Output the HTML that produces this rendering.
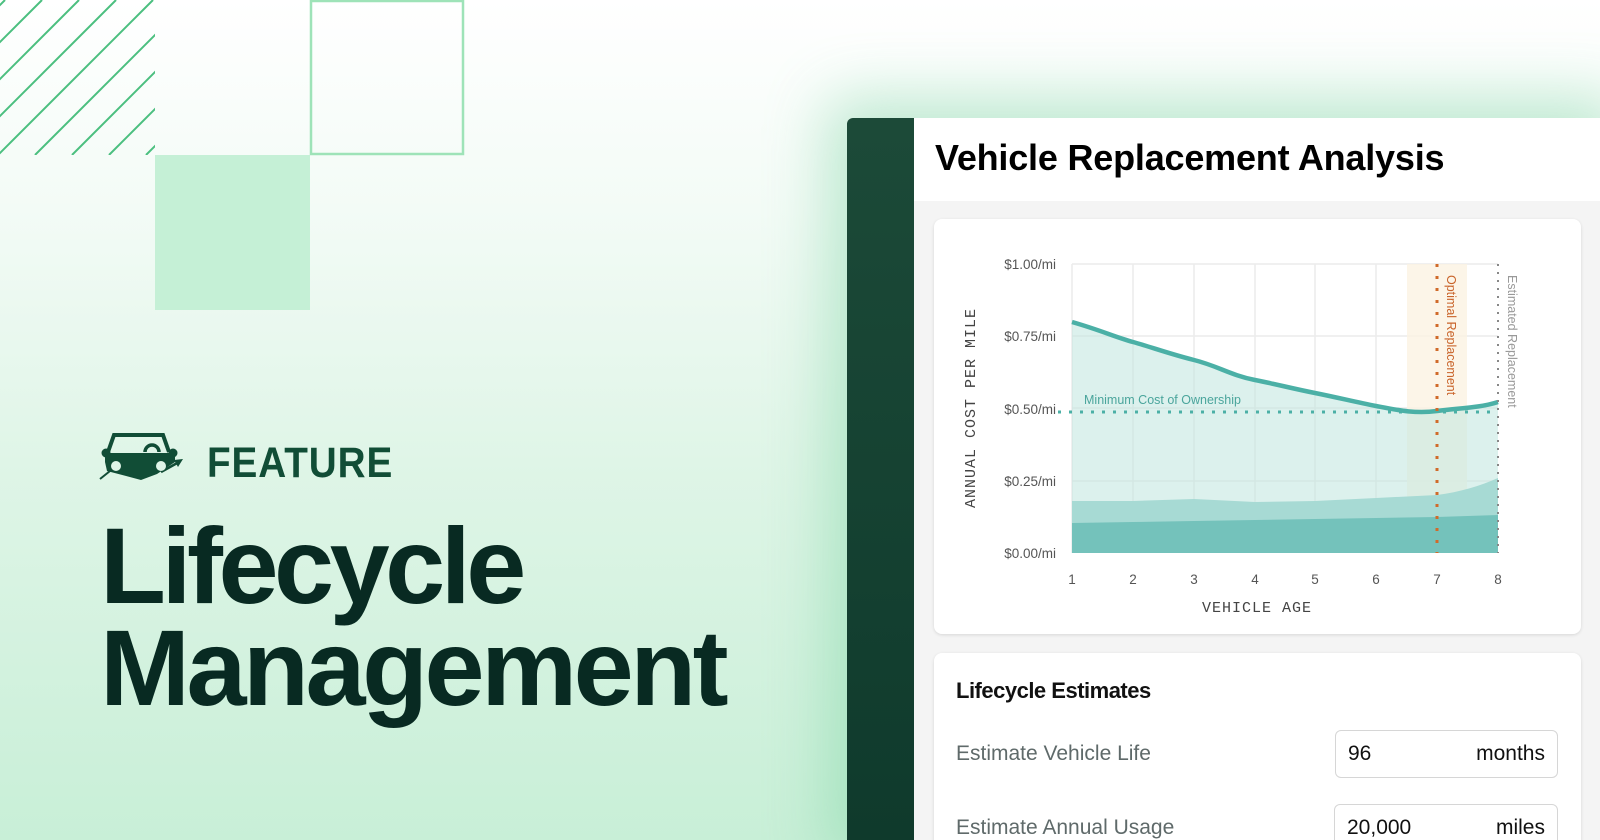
<!DOCTYPE html>
<html><head><meta charset="utf-8"><style>
*{margin:0;padding:0;box-sizing:border-box}
html,body{width:1600px;height:840px;overflow:hidden}
body{position:relative;font-family:"Liberation Sans",sans-serif;
background:linear-gradient(180deg,#ffffff 0%,#f3fbf6 25%,#dff5e7 55%,#c8efd7 100%);}
.abs{position:absolute}
.feature{left:207px;top:439px;font-size:43px;font-weight:bold;color:#114d36;letter-spacing:1px;transform:scaleX(0.9);transform-origin:left top;white-space:nowrap}
.h1{left:100px;font-size:108px;font-weight:bold;color:#082a22;letter-spacing:-4.5px;line-height:1;white-space:nowrap}
.panel{left:847px;top:118px;width:753px;height:722px;border-radius:6px 0 0 0;
box-shadow:0 0 60px 20px rgba(120,210,160,0.45);background:#f4f4f4;overflow:hidden}
.side{left:0;top:0;width:67px;height:722px;background:linear-gradient(180deg,#1c4a38,#0f3a2c)}
.head{left:67px;top:0;width:686px;height:83px;background:#fff}
.title{left:88px;top:19px;font-size:36px;font-weight:bold;color:#000;letter-spacing:-0.2px;white-space:nowrap}
.card{background:#fff;border-radius:8px;box-shadow:0 1px 3px rgba(0,0,0,0.12)}
.lbl{font-size:21px;color:#5f6a6a}
.inp{border:1.5px solid #d6d6d6;border-radius:6px;background:#fff;font-size:21px;color:#111;padding:0 12px;display:flex;justify-content:space-between;align-items:center}
</style></head><body>
<svg class="abs" style="left:0;top:0" width="480" height="320">
<defs><clipPath id="c"><rect x="0" y="0" width="155" height="155"/></clipPath></defs>
<g clip-path="url(#c)" stroke="#4bbf7f" stroke-width="2">
<line x1="-150" y1="155" x2="5" y2="0"/><line x1="-113" y1="155" x2="42" y2="0"/><line x1="-76" y1="155" x2="79" y2="0"/><line x1="-39" y1="155" x2="116" y2="0"/><line x1="-2" y1="155" x2="153" y2="0"/><line x1="35" y1="155" x2="190" y2="0"/><line x1="72" y1="155" x2="227" y2="0"/><line x1="109" y1="155" x2="264" y2="0"/><line x1="146" y1="155" x2="301" y2="0"/>
</g>
<rect x="311" y="1" width="152" height="153" fill="none" stroke="#9ee3b8" stroke-width="2.5"/>
<rect x="155" y="155" width="155" height="155" fill="#c5f0d6"/>
</svg>
<svg class="abs" style="left:95px;top:425px" width="95" height="65" viewBox="0 0 95 65">
<g fill="#114d36" stroke="#114d36">
<path d="M13,27 L19,10 L68,10 L74,27" fill="none" stroke-width="4"/>
<path d="M50,27 A7,7 0 0 1 64,27" fill="none" stroke-width="3.5"/>
<circle cx="11" cy="28" r="4"/><circle cx="78" cy="28" r="4"/>
<polygon points="10,28 80,28 80,37 62,49 46,55 12,46 10,37" stroke="none"/>
<line x1="15" y1="46" x2="5" y2="54" stroke-width="2"/>
<line x1="66" y1="47" x2="84" y2="37" stroke-width="2.5"/>
<polygon points="88,34 79,35 83,42" stroke="none"/>
</g>
<circle cx="21" cy="41" r="5" fill="#dff5e8"/><circle cx="66" cy="41" r="5" fill="#dff5e8"/>
</svg>
<div class="abs feature">FEATURE</div>
<div class="abs h1" style="top:512px">Lifecycle</div>
<div class="abs h1" style="top:614px;letter-spacing:-3.5px">Management</div>

<div class="abs panel">
<div class="abs side"></div>
<div class="abs head"></div>
<div class="abs title">Vehicle Replacement Analysis</div>
<div class="abs card" style="left:87px;top:101px;width:647px;height:415px"></div>
<div class="abs card" style="left:87px;top:535px;width:647px;height:200px"></div>
<div class="abs" style="left:109px;top:560px;font-size:22px;font-weight:bold;color:#111;letter-spacing:-0.5px">Lifecycle Estimates</div>
<div class="abs lbl" style="left:109px;top:624px">Estimate Vehicle Life</div>
<div class="abs inp" style="left:488px;top:612px;width:223px;height:48px"><span>96</span><span>months</span></div>
<div class="abs lbl" style="left:109px;top:698px">Estimate Annual Usage</div>
<div class="abs inp" style="left:487px;top:686px;width:224px;height:48px"><span>20,000</span><span>miles</span></div>
</div>

<svg class="abs" style="left:0;top:0" width="1600" height="840" font-family="Liberation Sans,sans-serif">
<g stroke="#ececec" stroke-width="1.5">
<line x1="1072" y1="264" x2="1498" y2="264"/><line x1="1072" y1="336" x2="1498" y2="336"/><line x1="1072" y1="408" x2="1498" y2="408"/><line x1="1072" y1="481" x2="1498" y2="481"/>
<line x1="1072" y1="264" x2="1072" y2="553"/><line x1="1133" y1="264" x2="1133" y2="553"/><line x1="1194" y1="264" x2="1194" y2="553"/><line x1="1255" y1="264" x2="1255" y2="553"/><line x1="1315" y1="264" x2="1315" y2="553"/><line x1="1376" y1="264" x2="1376" y2="553"/>
</g>
<rect x="1407" y="264" width="60" height="289" fill="#fbf3e2" opacity="0.8"/>
<path d="M1072,322 C1100,330 1115,337 1133,342 S1170,354 1194,360 S1230,375 1255,380 S1290,388 1315,393 S1355,402 1376,406 S1415,414 1437,411 S1480,408 1498,402 L1498,553 L1072,553Z" fill="#bfe5df" opacity="0.55"/>
<path d="M1072,501 L1133,501 L1194,499 L1255,502 L1315,501 L1376,498 L1437,495 C1460,492 1480,486 1498,478 L1498,553 L1072,553Z" fill="#a7dad4"/>
<path d="M1072,523 L1133,522 L1194,521 L1255,520 L1315,519 L1376,518 L1437,517 L1498,515 L1498,553 L1072,553Z" fill="#74c2bb"/>
<path d="M1072,322 C1100,330 1115,337 1133,342 S1170,354 1194,360 S1230,375 1255,380 S1290,388 1315,393 S1355,402 1376,406 S1415,414 1437,411 S1480,408 1498,402" fill="none" stroke="#4bb0a6" stroke-width="4.5"/>
<line x1="1058" y1="412" x2="1498" y2="412" stroke="#4bb0a6" stroke-width="3" stroke-dasharray="3 8"/>
<line x1="1437" y1="264" x2="1437" y2="553" stroke="#d06a2a" stroke-width="3" stroke-dasharray="3 9"/>
<line x1="1498" y1="264" x2="1498" y2="553" stroke="#888" stroke-width="2" stroke-dasharray="2 6"/>
<text x="1084" y="404" font-size="12.5" fill="#4aa59c">Minimum Cost of Ownership</text>
<text transform="translate(1447,275) rotate(90)" font-size="12.5" fill="#c9642a">Optimal Replacement</text>
<text transform="translate(1508,275) rotate(90)" font-size="12.5" fill="#999">Estimated Replacement</text>
<g font-size="13.5" fill="#555" text-anchor="end">
<text x="1056" y="269">$1.00/mi</text><text x="1056" y="341">$0.75/mi</text><text x="1056" y="414">$0.50/mi</text><text x="1056" y="486">$0.25/mi</text><text x="1056" y="558">$0.00/mi</text>
</g>
<g font-size="13.5" fill="#555" text-anchor="middle">
<text x="1072" y="584">1</text><text x="1133" y="584">2</text><text x="1194" y="584">3</text><text x="1255" y="584">4</text><text x="1315" y="584">5</text><text x="1376" y="584">6</text><text x="1437" y="584">7</text><text x="1498" y="584">8</text>
</g>
<text x="1257" y="612" font-family="Liberation Mono,monospace" font-size="15" fill="#444" text-anchor="middle" letter-spacing="1">VEHICLE AGE</text>
<text transform="translate(975,408) rotate(-90)" font-family="Liberation Mono,monospace" font-size="15" fill="#444" text-anchor="middle" letter-spacing="1">ANNUAL COST PER MILE</text>
</svg>
</body></html>
